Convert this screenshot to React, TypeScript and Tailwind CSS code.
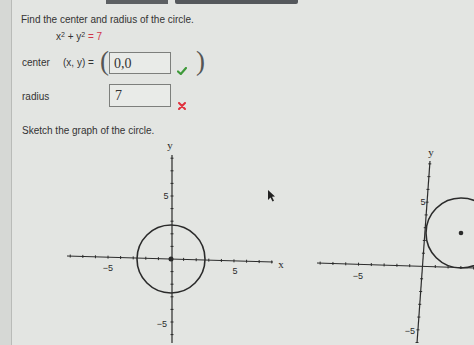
import React from 'react'

const ink = '#2b2b2b'

function ticks(x1: number, y1: number, x2: number, y2: number, from: number, to: number, step: number, len: number, vertical: boolean) {
  const out: React.ReactElement[] = []
  for (let i = from; i <= to; i++) {
    const t = i * step
    const dx = x2 - x1
    const dy = y2 - y1
    const d = Math.sqrt(dx * dx + dy * dy)
    const px = x1 + (dx / d) * t
    const py = y1 + (dy / d) * t
    if (i === 0) continue
    out.push(
      vertical ? (
        <line key={i} x1={px - len} y1={py} x2={px + len} y2={py} stroke={ink} strokeWidth={1} />
      ) : (
        <line key={i} x1={px} y1={py - len} x2={px} y2={py + len} stroke={ink} strokeWidth={1} />
      )
    )
  }
  return out
}

const GraphLeft = () => (
  <svg width={230} height={205} className="shrink-0">
    {/* x axis */}
    <line x1={7} y1={118} x2={213} y2={124} stroke={ink} strokeWidth={1.2} />
    {ticks(111, 121, 213, 124, -8, 8, 12.6, 1.5, false)}
    {/* y axis */}
    <line x1={112} y1={17} x2={112} y2={205} stroke={ink} strokeWidth={1.2} />
    {ticks(112, 121, 112, 17, -7, 8, 12.6, 1.5, true)}
    <text x={110} y={11} fontSize={11} fontFamily="Liberation Serif, serif" fill={ink} textAnchor="middle">y</text>
    <text x={221} y={130} fontSize={11} fontFamily="Liberation Serif, serif" fill={ink} textAnchor="middle">x</text>
    <text x={48} y={133} fontSize={9} fontFamily="Liberation Sans, sans-serif" fill={ink} textAnchor="middle">−5</text>
    <text x={175} y={136} fontSize={9} fontFamily="Liberation Sans, sans-serif" fill={ink} textAnchor="middle">5</text>
    <text x={106} y={61} fontSize={9} fontFamily="Liberation Sans, sans-serif" fill={ink} textAnchor="middle">5</text>
    <text x={102} y={189} fontSize={9} fontFamily="Liberation Sans, sans-serif" fill={ink} textAnchor="middle">−5</text>
    <circle cx={111} cy={121} r={34} fill="none" stroke={ink} strokeWidth={1.6} />
    <circle cx={111} cy={121} r={2.5} fill={ink} />
    {/* mouse pointer */}
    <path d="M208 52 L208 62 L210.5 59.5 L212.5 63.5 L214 62.8 L212 58.8 L215 58.5 Z" fill="#222" />
  </svg>
)

const GraphRight = () => (
  <svg width={164} height={205} className="shrink-0">
    <line x1={7} y1={125} x2={164} y2={130} stroke={ink} strokeWidth={1.2} />
    {ticks(112.5, 128, 7, 125, 1, 8, 12.8, 1.5, false)}
    {ticks(112.5, 128, 164, 130, 1, 4, 12.8, 1.5, false)}
    <line x1={120} y1={23} x2={107} y2={205} stroke={ink} strokeWidth={1.2} />
    {ticks(112.5, 128, 120, 23, 1, 8, 12.8, 1.5, true)}
    {ticks(112.5, 128, 107, 205, 1, 6, 12.8, 1.5, true)}
    <text x={121} y={18} fontSize={11} fontFamily="Liberation Serif, serif" fill={ink} textAnchor="middle">y</text>
    <text x={113} y={67} fontSize={9} fontFamily="Liberation Sans, sans-serif" fill={ink} textAnchor="middle">5</text>
    <text x={100} y={196} fontSize={9} fontFamily="Liberation Sans, sans-serif" fill={ink} textAnchor="middle">−5</text>
    <text x={48} y={141} fontSize={9} fontFamily="Liberation Sans, sans-serif" fill={ink} textAnchor="middle">−5</text>
    <circle cx={151} cy={95} r={35} fill="none" stroke={ink} strokeWidth={1.6} />
    <circle cx={151} cy={95} r={2.3} fill={ink} />
  </svg>
)

const Check = () => (
  <svg width={10} height={8} viewBox="0 0 10 8">
    <path d="M1 4.5 L3.8 7 L9 1" fill="none" stroke="#3f9a3a" strokeWidth={2.2} strokeLinecap="round" />
  </svg>
)

const Cross = () => (
  <svg width={8} height={8} viewBox="0 0 8 8">
    <path d="M1 1 L7 7 M7 1 L1 7" stroke="#e0313d" strokeWidth={2} strokeLinecap="round" />
  </svg>
)

export default function App() {
  return (
    <div className="flex w-[474px] h-[345px] overflow-hidden bg-[#e3e5e2] text-[#333]" style={{ fontFamily: '"Liberation Sans", Arial, sans-serif' }}>
      <div className="w-[12px] shrink-0 bg-[#d6d8d5] border-r border-[#b9bbb8]" />
      <div className="flex flex-col flex-1 min-w-0">
        <div className="flex h-[4px] gap-[7px] pl-[94px]">
          <div className="w-[62px] bg-[#5d6063]" />
          <div className="w-[123px] bg-[#55585c] rounded-b-[2px]" />
        </div>
        <div className="pl-[9px] pt-[10px] text-[10px] leading-[12px]">Find the center and radius of the circle.</div>
        <div className="pl-[44px] pt-[5px] text-[10px] leading-[12px]">
          x<sup className="text-[7px]">2</sup> + y<sup className="text-[7px]">2</sup> <span className="text-[#d0364a]">= 7</span>
        </div>
        <div className="flex items-center pl-[10px] pt-[8px] h-[32px] text-[10px]">
          <span className="w-[32px] -mt-[2px]">center</span>
          <span className="ml-[9px] w-[37px] -mt-[2px]">(x, y) =</span>
          <span className="text-[27px] leading-none text-[#555] -mt-[4px]" style={{ fontFamily: '"Liberation Serif", serif' }}>(</span>
          <div className="w-[62px] h-[22px] border border-[#7d7f7c] bg-[#e9ebe8] flex items-center pl-[4px] text-[14px]" style={{ fontFamily: '"Liberation Serif", serif' }}>0,0</div>
          <div className="ml-[6px] mt-[16px]"><Check /></div>
          <span className="ml-[9px] text-[27px] leading-none text-[#555] -mt-[4px]" style={{ fontFamily: '"Liberation Serif", serif' }}>)</span>
        </div>
        <div className="flex items-start pl-[10px] pt-[9px] text-[10px]">
          <span className="w-[87px] pt-[5px]">radius</span>
          <div className="w-[62px] h-[23px] border border-[#7d7f7c] bg-[#e9ebe8] flex items-center pl-[5px] text-[14px]" style={{ fontFamily: '"Liberation Serif", serif' }}>7</div>
          <div className="ml-[7px] mt-[18px]"><Cross /></div>
        </div>
        <div className="pl-[10px] pt-[15px] text-[10px] leading-[12px]">Sketch the graph of the circle.</div>
        <div className="flex pl-[48px] pt-[1px]">
          <GraphLeft />
          <div className="w-[20px] shrink-0" />
          <GraphRight />
        </div>
      </div>
    </div>
  )
}
